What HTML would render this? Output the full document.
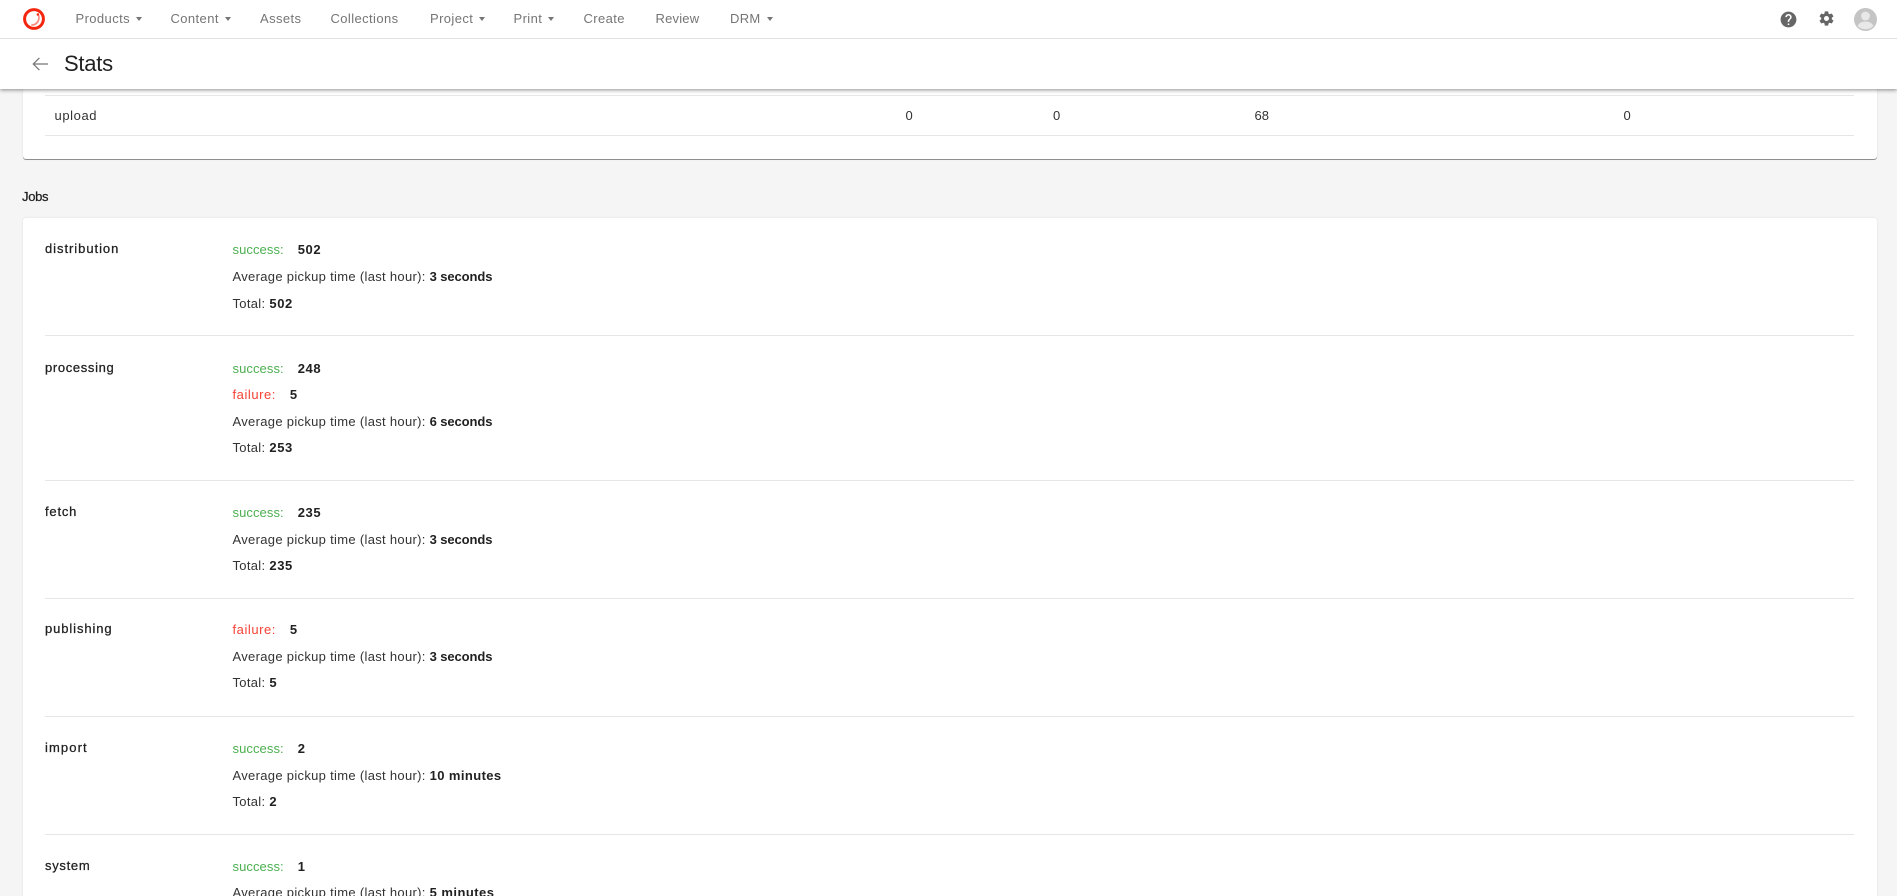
<!DOCTYPE html>
<html lang="en"><head><meta charset="utf-8"><title>Stats</title>
<style>
html,body{margin:0;padding:0;width:1897px;height:896px;overflow:hidden;background:#f5f5f5}
body{position:relative;font-family:"Liberation Sans",sans-serif;font-size:13px;color:#212121}
.a{position:absolute;white-space:nowrap;line-height:18px}
.nav{top:10px;color:#757575;letter-spacing:.4px}
.caret{display:inline-block;width:0;height:0;border-left:3.5px solid transparent;border-right:3.5px solid transparent;border-top:4px solid #757575;margin-left:6px;vertical-align:2px}
.top{position:absolute;left:0;top:0;width:1897px;height:38px;background:#fff;border-bottom:1px solid #e0e0e0;z-index:3}
.head{position:absolute;left:0;top:39px;width:1897px;height:50px;background:#fff;box-shadow:0 1px 4px rgba(0,0,0,.45);z-index:2}
.card{position:absolute;left:23px;width:1854px;background:#fff;border-radius:3px}
.c1{top:70px;height:89px;box-shadow:0 1px 0 rgba(0,0,0,.4),0 0 2px rgba(0,0,0,.1)}
.c2{top:218px;height:700px;box-shadow:0 0 2px rgba(0,0,0,.1)}
.ln{position:absolute;left:45px;width:1809px;height:1px;background:#e6e6e6;z-index:1}
.lab{left:45px;color:#212121;-webkit-text-stroke:.25px #212121;z-index:1}
.v{left:232.5px;letter-spacing:.31px;color:#333;z-index:1}
.s{color:#4caf50;letter-spacing:.08px}.f{color:#f44336;letter-spacing:.55px}
b{color:#212121;letter-spacing:-.1px}
b.n{letter-spacing:.6px}
.gap{display:inline-block;width:14px}
.z{z-index:1;color:#333}
</style></head><body>
<div class="top"></div>
<div class="head"></div>
<svg class="a" style="left:22px;top:7px;z-index:4" width="24" height="24" viewBox="0 0 24 24"><circle cx="12" cy="12" r="9.4" fill="none" stroke="#f4260f" stroke-width="3"/><path d="M15.6 6.2c1.6 2.2 1.8 5.4.5 8-1.3 2.4-3.6 3.8-6.8 3.9" fill="none" stroke="#f4260f" stroke-width="1.7" opacity=".55"/><circle cx="15.8" cy="7.6" r="1.2" fill="#f4260f"/></svg>
<div class="a nav" style="left:75.5px;z-index:4">Products<span class="caret"></span></div>
<div class="a nav" style="left:170.5px;z-index:4">Content<span class="caret"></span></div>
<div class="a nav" style="left:260px;z-index:4">Assets</div>
<div class="a nav" style="left:330.5px;z-index:4">Collections</div>
<div class="a nav" style="left:430px;z-index:4">Project<span class="caret"></span></div>
<div class="a nav" style="left:513.5px;z-index:4">Print<span class="caret"></span></div>
<div class="a nav" style="left:583.5px;z-index:4">Create</div>
<div class="a nav" style="left:655.5px;z-index:4;letter-spacing:.2px">Review</div>
<div class="a nav" style="left:730px;z-index:4;letter-spacing:.3px">DRM<span class="caret"></span></div>
<svg class="a" style="left:1778.5px;top:9.5px;z-index:4" width="19" height="19" viewBox="0 0 24 24"><path fill="#666" d="M12 2C6.48 2 2 6.48 2 12s4.48 10 10 10 10-4.48 10-10S17.52 2 12 2zm1 17h-2v-2h2v2zm2.07-7.75-.9.92C13.45 12.9 13 13.5 13 15h-2v-.5c0-1.1.45-2.1 1.17-2.83l1.24-1.26c.37-.36.59-.86.59-1.41 0-1.1-.9-2-2-2s-2 .9-2 2H8c0-2.21 1.79-4 4-4s4 1.79 4 4c0 .88-.36 1.68-.93 2.25z"/></svg>
<svg class="a" style="left:1817.5px;top:10px;z-index:4" width="17" height="17" viewBox="0 0 24 24"><path fill="#666" d="M19.43 12.98c.04-.32.07-.64.07-.98s-.03-.66-.07-.98l2.11-1.65c.19-.15.24-.42.12-.64l-2-3.46c-.12-.22-.39-.3-.61-.22l-2.49 1c-.52-.4-1.08-.73-1.69-.98l-.38-2.65C14.46 2.18 14.25 2 14 2h-4c-.25 0-.46.18-.49.42l-.38 2.65c-.61.25-1.17.59-1.69.98l-2.49-1c-.23-.09-.49 0-.61.22l-2 3.46c-.13.22-.07.49.12.64l2.11 1.65c-.04.32-.07.65-.07.98s.03.66.07.98l-2.11 1.65c-.19.15-.24.42-.12.64l2 3.46c.12.22.39.3.61.22l2.49-1c.52.4 1.08.73 1.69.98l.38 2.65c.03.24.24.42.49.42h4c.25 0 .46-.18.49-.42l.38-2.65c.61-.25 1.17-.59 1.69-.98l2.49 1c.23.09.49 0 .61-.22l2-3.46c.12-.22.07-.49-.12-.64l-2.11-1.65zM12 15.5c-1.93 0-3.5-1.57-3.5-3.5s1.57-3.5 3.5-3.5 3.5 1.57 3.5 3.5-1.57 3.5-3.5 3.5z"/></svg>
<svg class="a" style="left:1853.5px;top:7.5px;z-index:4" width="23" height="23" viewBox="0 0 23 23"><circle cx="11.5" cy="11.5" r="11.5" fill="#c4c4c4"/><circle cx="11.5" cy="8" r="4.4" fill="#e8e8e8"/><path d="M3.6 18c1.1-3 4.4-4.5 7.9-4.5s6.8 1.5 7.9 4.5c-1.9 2-4.7 3.2-7.9 3.2s-6-1.2-7.9-3.2z" fill="#e8e8e8"/></svg>
<svg class="a" style="left:30.5px;top:55px;z-index:4" width="18" height="18" viewBox="0 0 18 18"><path d="M17 9H2.3M8.4 2.9 2.3 9l6.1 6.1" fill="none" stroke="#757575" stroke-width="1.2"/></svg>
<div class="a" style="left:64px;top:50px;font-size:22px;line-height:28px;color:#212121;z-index:4;letter-spacing:-.25px">Stats</div>

<div class="card c1"></div>
<div class="ln" style="top:95px"></div>
<div class="a z" style="left:54.5px;top:107px;letter-spacing:.6px">upload</div>
<div class="a z" style="left:905.5px;top:107px">0</div>
<div class="a z" style="left:1053px;top:107px">0</div>
<div class="a z" style="left:1254.5px;top:107px">68</div>
<div class="a z" style="left:1623.5px;top:107px">0</div>
<div class="ln" style="top:135px"></div>

<div class="a lab" style="left:22px;top:188px;letter-spacing:-.3px">Jobs</div>
<div class="card c2"></div>

<div class="a lab" style="top:240px;letter-spacing:.95px">distribution</div>
<div class="a v" style="top:241px"><span class="s">success:</span><span class="gap"></span><b class="n">502</b></div>
<div class="a v" style="top:268px">Average pickup time (last hour): <b>3 seconds</b></div>
<div class="a v" style="top:295px">Total: <b class="n">502</b></div>
<div class="ln" style="top:335px"></div>

<div class="a lab" style="top:359px;letter-spacing:.65px">processing</div>
<div class="a v" style="top:360px"><span class="s">success:</span><span class="gap"></span><b class="n">248</b></div>
<div class="a v" style="top:386px"><span class="f">failure:</span><span class="gap"></span><b class="n">5</b></div>
<div class="a v" style="top:413px">Average pickup time (last hour): <b>6 seconds</b></div>
<div class="a v" style="top:439px">Total: <b class="n">253</b></div>
<div class="ln" style="top:480px"></div>

<div class="a lab" style="top:503px;letter-spacing:.8px">fetch</div>
<div class="a v" style="top:504px"><span class="s">success:</span><span class="gap"></span><b class="n">235</b></div>
<div class="a v" style="top:531px">Average pickup time (last hour): <b>3 seconds</b></div>
<div class="a v" style="top:557px">Total: <b class="n">235</b></div>
<div class="ln" style="top:598px"></div>

<div class="a lab" style="top:620px;letter-spacing:.9px">publishing</div>
<div class="a v" style="top:621px"><span class="f">failure:</span><span class="gap"></span><b class="n">5</b></div>
<div class="a v" style="top:648px">Average pickup time (last hour): <b>3 seconds</b></div>
<div class="a v" style="top:674px">Total: <b class="n">5</b></div>
<div class="ln" style="top:716px"></div>

<div class="a lab" style="top:739px;letter-spacing:1.1px">import</div>
<div class="a v" style="top:740px"><span class="s">success:</span><span class="gap"></span><b class="n">2</b></div>
<div class="a v" style="top:767px">Average pickup time (last hour): <b style="letter-spacing:.4px">10 minutes</b></div>
<div class="a v" style="top:793px">Total: <b class="n">2</b></div>
<div class="ln" style="top:834px"></div>

<div class="a lab" style="top:857px;letter-spacing:.7px">system</div>
<div class="a v" style="top:858px"><span class="s">success:</span><span class="gap"></span><b class="n">1</b></div>
<div class="a v" style="top:884px">Average pickup time (last hour): <b style="letter-spacing:.45px">5 minutes</b></div>
</body></html>
